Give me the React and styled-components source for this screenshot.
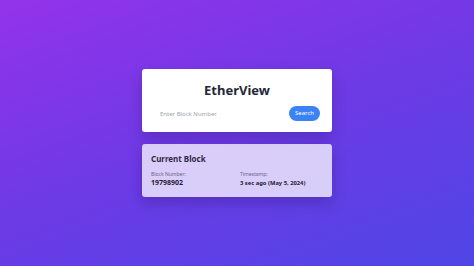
import React from 'react';
import styled, { createGlobalStyle } from 'styled-components';

const GlobalStyle = createGlobalStyle`
  html, body {
    margin: 0;
    padding: 0;
  }
  body {
    font-family: "Noto Sans", "Open Sans", sans-serif;
  }
`;

const Page = styled.div`
  width: 474px;
  height: 266px;
  display: flex;
  flex-direction: column;
  align-items: center;
  justify-content: center;
  gap: 12px;
  background: linear-gradient(160deg, #9333ea 0%, #6d3ae6 50%, #4f46e5 100%);
  overflow: hidden;
`;

const Card = styled.div`
  width: 190px;
  box-sizing: border-box;
  border-radius: 3px;
  background: ${(p) => (p.$soft ? 'rgba(255, 255, 255, 0.75)' : '#ffffff')};
  box-shadow: 0 6px 14px rgba(30, 10, 80, 0.25);
  padding: ${(p) => p.$pad};
`;

const Title = styled.h1`
  margin: 0 0 6px;
  text-align: center;
  font-size: 13px;
  line-height: 20px;
  font-weight: 700;
  color: #1f2937;
`;

const SearchRow = styled.div`
  display: flex;
  align-items: center;
  gap: 6px;
`;

const Input = styled.input`
  flex: 1;
  min-width: 0;
  border: none;
  outline: none;
  background: transparent;
  font-family: inherit;
  font-size: 6px;
  padding: 0 0 0 6px;
  color: #374151;

  &::placeholder {
    color: #9ca3af;
  }
`;

const Button = styled.button`
  height: 15px;
  padding: 0 6px;
  border: none;
  border-radius: 999px;
  background: #3b82f6;
  color: #ffffff;
  font-family: inherit;
  font-size: 6px;
  font-weight: 400;
  line-height: 15px;
`;

const Heading = styled.h2`
  margin: 0 0 7px;
  font-size: 8px;
  line-height: 11px;
  font-weight: 700;
  color: #2e2a45;
`;

const Grid = styled.div`
  display: grid;
  grid-template-columns: 1fr 1fr;
  column-gap: 6px;
`;

const Label = styled.div`
  font-size: 5px;
  line-height: 7px;
  color: #6b6385;
`;

const Value = styled.div`
  font-size: ${(p) => p.$size || '7px'};
  line-height: 10px;
  font-weight: 700;
  color: #1f1b33;
`;

export default function App() {
  return (
    <>
      <GlobalStyle />
      <Page>
        <Card $pad="11px 12px 11px">
          <Title>EtherView</Title>
          <SearchRow>
            <Input placeholder="Enter Block Number" />
            <Button>Search</Button>
          </SearchRow>
        </Card>
        <Card $soft $pad="9px 9px 9px">
          <Heading>Current Block</Heading>
          <Grid>
            <div>
              <Label>Block Number:</Label>
              <Value>19798902</Value>
            </div>
            <div>
              <Label>Timestamp:</Label>
              <Value $size="5.8px">3 sec ago (May 5, 2024)</Value>
            </div>
          </Grid>
        </Card>
      </Page>
    </>
  );
}
